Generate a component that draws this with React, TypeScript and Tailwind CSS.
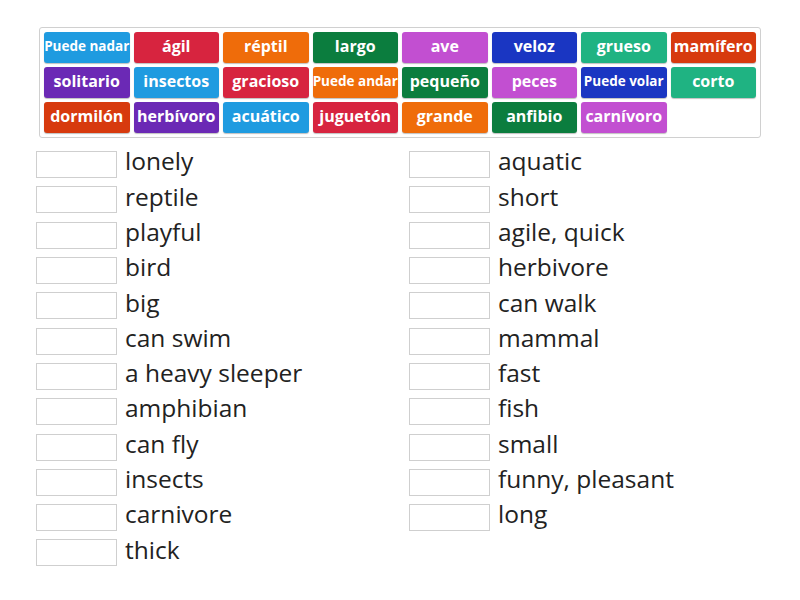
const tiles: { label: string; color: string; small?: boolean }[] = [
  { label: "Puede nadar", color: "bg-[#1f9be0]", small: true },
  { label: "ágil", color: "bg-[#d7243f]" },
  { label: "réptil", color: "bg-[#ef6c0a]" },
  { label: "largo", color: "bg-[#0b7d3e]" },
  { label: "ave", color: "bg-[#c24fd1]" },
  { label: "veloz", color: "bg-[#1a36c2]" },
  { label: "grueso", color: "bg-[#1fb382]" },
  { label: "mamífero", color: "bg-[#d73a0e]" },
  { label: "solitario", color: "bg-[#6b29b5]" },
  { label: "insectos", color: "bg-[#1f9be0]" },
  { label: "gracioso", color: "bg-[#d7243f]" },
  { label: "Puede andar", color: "bg-[#ef6c0a]", small: true },
  { label: "pequeño", color: "bg-[#0b7d3e]" },
  { label: "peces", color: "bg-[#c24fd1]" },
  { label: "Puede volar", color: "bg-[#1a36c2]", small: true },
  { label: "corto", color: "bg-[#1fb382]" },
  { label: "dormilón", color: "bg-[#d73a0e]" },
  { label: "herbívoro", color: "bg-[#6b29b5]" },
  { label: "acuático", color: "bg-[#1f9be0]" },
  { label: "juguetón", color: "bg-[#d7243f]" },
  { label: "grande", color: "bg-[#ef6c0a]" },
  { label: "anfibio", color: "bg-[#0b7d3e]" },
  { label: "carnívoro", color: "bg-[#c24fd1]" },
];

const left = [
  "lonely",
  "reptile",
  "playful",
  "bird",
  "big",
  "can swim",
  "a heavy sleeper",
  "amphibian",
  "can fly",
  "insects",
  "carnivore",
  "thick",
];

const right = [
  "aquatic",
  "short",
  "agile, quick",
  "herbivore",
  "can walk",
  "mammal",
  "fast",
  "fish",
  "small",
  "funny, pleasant",
  "long",
];

function Row({ text }: { text: string }) {
  return (
    <div className="flex h-[35.3px] items-center gap-2">
      <div className="h-[27px] w-[81px] shrink-0 border border-[#cfcfcf] bg-white" />
      <span className="-mt-[6px] text-[24.5px] leading-none text-[#222]">{text}</span>
    </div>
  );
}

export default function App() {
  return (
    <div
      className="h-[600px] w-[800px] bg-white"
      style={{ fontFamily: '"Open Sans", sans-serif' }}
    >
      <div className="pt-[27px] pl-[39px]">
        {/* fichas */}
        <div className="w-[722px] rounded-[3px] border border-[#d0d0d0] p-1">
          <div className="grid grid-cols-8 gap-1">
            {tiles.map((t) => (
              <div
                key={t.label}
                className={`${t.color} flex h-[31px] items-center justify-center rounded-[3px] font-bold text-white shadow-[0_1px_1px_rgba(0,0,0,0.25)] ${
                  t.small ? "pb-[2px] text-[13.5px]" : "pb-[3px] text-[16px]"
                }`}
              >
                {t.label}
              </div>
            ))}
          </div>
        </div>
      </div>

      {/* listas */}
      <div className="flex pt-[9px]">
        <div className="ml-[36px] w-[373px]">
          {left.map((t) => (
            <Row key={t} text={t} />
          ))}
        </div>
        <div>
          {right.map((t) => (
            <Row key={t} text={t} />
          ))}
        </div>
      </div>
    </div>
  );
}
